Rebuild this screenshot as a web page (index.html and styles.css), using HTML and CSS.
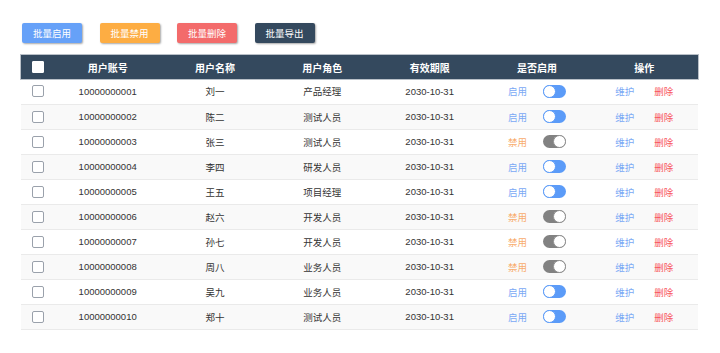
FILE: index.html
```html
<!DOCTYPE html>
<html lang="zh-CN">
<head>
<meta charset="utf-8">
<link rel="stylesheet" href="styles.css">
</head>
<body>
<div class="page">
  <div class="toolbar">
    <button class="btn btn-blue">批量启用</button>
    <button class="btn btn-orange">批量禁用</button>
    <button class="btn btn-red">批量删除</button>
    <button class="btn btn-dark">批量导出</button>
  </div>
  <table class="grid">
    <colgroup>
      <col class="c-check"><col><col><col><col><col><col>
    </colgroup>
    <thead>
      <tr>
        <th><span class="check check-head"></span></th>
        <th>用户账号</th><th>用户名称</th><th>用户角色</th><th>有效期限</th><th>是否启用</th><th>操作</th>
      </tr>
    </thead>
    <tbody>
      <tr><td><span class="check"></span></td><td>10000000001</td><td>刘一</td><td>产品经理</td><td>2030-10-31</td><td><div class="status"><span class="on-text">启用</span><span class="switch on"></span></div></td><td><div class="ops"><span class="op-edit">维护</span><span class="op-del">删除</span></div></td></tr>
      <tr><td><span class="check"></span></td><td>10000000002</td><td>陈二</td><td>测试人员</td><td>2030-10-31</td><td><div class="status"><span class="on-text">启用</span><span class="switch on"></span></div></td><td><div class="ops"><span class="op-edit">维护</span><span class="op-del">删除</span></div></td></tr>
      <tr><td><span class="check"></span></td><td>10000000003</td><td>张三</td><td>测试人员</td><td>2030-10-31</td><td><div class="status"><span class="off-text">禁用</span><span class="switch off"></span></div></td><td><div class="ops"><span class="op-edit">维护</span><span class="op-del">删除</span></div></td></tr>
      <tr><td><span class="check"></span></td><td>10000000004</td><td>李四</td><td>研发人员</td><td>2030-10-31</td><td><div class="status"><span class="on-text">启用</span><span class="switch on"></span></div></td><td><div class="ops"><span class="op-edit">维护</span><span class="op-del">删除</span></div></td></tr>
      <tr><td><span class="check"></span></td><td>10000000005</td><td>王五</td><td>项目经理</td><td>2030-10-31</td><td><div class="status"><span class="on-text">启用</span><span class="switch on"></span></div></td><td><div class="ops"><span class="op-edit">维护</span><span class="op-del">删除</span></div></td></tr>
      <tr><td><span class="check"></span></td><td>10000000006</td><td>赵六</td><td>开发人员</td><td>2030-10-31</td><td><div class="status"><span class="off-text">禁用</span><span class="switch off"></span></div></td><td><div class="ops"><span class="op-edit">维护</span><span class="op-del">删除</span></div></td></tr>
      <tr><td><span class="check"></span></td><td>10000000007</td><td>孙七</td><td>开发人员</td><td>2030-10-31</td><td><div class="status"><span class="off-text">禁用</span><span class="switch off"></span></div></td><td><div class="ops"><span class="op-edit">维护</span><span class="op-del">删除</span></div></td></tr>
      <tr><td><span class="check"></span></td><td>10000000008</td><td>周八</td><td>业务人员</td><td>2030-10-31</td><td><div class="status"><span class="off-text">禁用</span><span class="switch off"></span></div></td><td><div class="ops"><span class="op-edit">维护</span><span class="op-del">删除</span></div></td></tr>
      <tr><td><span class="check"></span></td><td>10000000009</td><td>吴九</td><td>业务人员</td><td>2030-10-31</td><td><div class="status"><span class="on-text">启用</span><span class="switch on"></span></div></td><td><div class="ops"><span class="op-edit">维护</span><span class="op-del">删除</span></div></td></tr>
      <tr><td><span class="check"></span></td><td>10000000010</td><td>郑十</td><td>测试人员</td><td>2030-10-31</td><td><div class="status"><span class="on-text">启用</span><span class="switch on"></span></div></td><td><div class="ops"><span class="op-edit">维护</span><span class="op-del">删除</span></div></td></tr>
    </tbody>
  </table>
</div>
</body>
</html>
```

FILE: styles.css
```css
* { box-sizing: border-box; }
html, body { margin: 0; padding: 0; background: #fff; }
body {
  font-family: "Liberation Sans", "Noto Sans CJK SC", sans-serif;
  font-size: 9.5px;
  color: #333;
}
.page { padding: 23px 0 0 21px; }
.toolbar {
  display: flex;
  gap: 17.5px;
  padding-left: 1px;
}
.btn {
  width: 60px;
  height: 20px;
  border: none;
  border-radius: 2px;
  color: #fff;
  font-family: "Liberation Sans", "Noto Sans CJK SC", sans-serif;
  font-size: 9.5px;
  padding: 0;
  box-shadow: 1px 1px 2px rgba(0,0,0,0.35);
}
.btn-blue { background: #66a1f8; }
.btn-orange { background: #fdad43; }
.btn-red { background: #f36b6b; }
.btn-dark { background: #34495e; }

.grid {
  margin-top: 12px;
  width: 677px;
  border-collapse: collapse;
  table-layout: fixed;
}
.c-check { width: 33px; }
.grid th {
  background: #34495e;
  color: #fff;
  font-weight: bold;
  font-size: 10px;
  height: 24px;
  padding: 0;
  text-align: center;
}
.grid thead tr { box-shadow: 0 0 0 1px #b9c0c8; }
.grid td {
  height: 25px;
  padding: 0;
  text-align: center;
  border-bottom: 1px solid #eaeaea;
}
.grid tbody tr:nth-child(even) td { background: #f9f9f9; }
.check {
  display: inline-block;
  width: 12px;
  height: 12px;
  border: 1px solid #9aa1ab;
  border-radius: 2px;
  background: #fff;
  vertical-align: middle;
}
.check-head { border-color: #fff; border-radius: 1px; }
.status, .ops {
  display: flex;
  align-items: center;
  justify-content: center;
}
.status { gap: 16px; }
.ops { gap: 20px; }
.on-text { color: #7aa8f5; }
.off-text { color: #f8ac6c; }
.op-edit { color: #7aa8f5; }
.op-del { color: #f8545c; }
.switch {
  position: relative;
  display: inline-block;
  width: 23px;
  height: 13px;
  border-radius: 7px;
}
.switch::after {
  content: "";
  position: absolute;
  top: 0;
  width: 13px;
  height: 13px;
  border-radius: 50%;
  background: #fff;
  box-sizing: border-box;
}
.switch.on { background: #5b9bf8; }
.switch.on::after { left: 0; border: 1px solid #5b9bf8; }
.switch.off { background: #828282; }
.switch.off::after { right: 0; border: 1px solid #909090; }
```
